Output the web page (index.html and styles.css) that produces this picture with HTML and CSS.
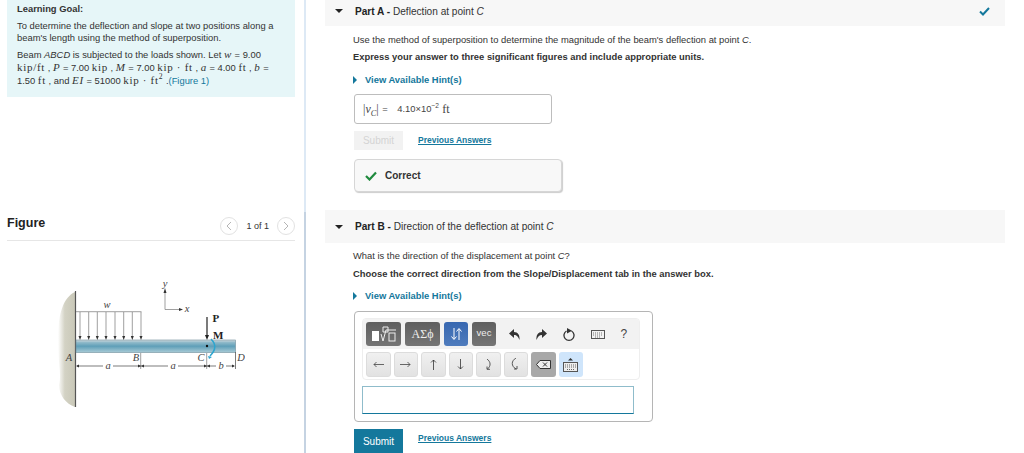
FILE: index.html
```html
<!DOCTYPE html>
<html lang="en">
<head>
    <meta charset="UTF-8">
    <title>Deflection and slope by superposition</title>
    <link rel="stylesheet" href="styles.css">
</head>
<body>
<div class="page">
    <!-- left column -->
    <div class="left">
        <div class="goal">
            <p class="goal-title">Learning Goal:</p>
            <p class="goal-text">To determine the deflection and slope at two positions along a beam's length using the method of superposition.</p>
            <p class="goal-text goal-vars">Beam <i>ABCD</i> is subjected to the loads shown. Let <i class="m">w</i> = 9.00 <span class="m">kip/ft</span> , <i class="m">P</i> = 7.00 <span class="m">kip</span> , <i class="m">M</i> = 7.00 <span class="m">kip · ft</span> , <i class="m">a</i> = 4.00 <span class="m">ft</span> , <i class="m">b</i> = 1.50 <span class="m">ft</span> , and <i class="m">EI</i> = 51000 <span class="m">kip · ft<sup>2</sup></span> .<a class="fig-link">(Figure 1)</a></p>
        </div>
        <div class="fig-head">
            <span class="fig-title">Figure</span>
            <div class="pager">
                <span class="page-btn"><svg width="6" height="10" viewBox="0 0 6 10"><path d="M5 1 1 5l4 4" fill="none" stroke="#b5b5b5" stroke-width="1"/></svg></span>
                <span class="page-num">1 of 1</span>
                <span class="page-btn"><svg width="6" height="10" viewBox="0 0 6 10"><path d="M1 1l4 4-4 4" fill="none" stroke="#b5b5b5" stroke-width="1"/></svg></span>
            </div>
        </div>
        <svg class="beam" width="190" height="183" viewBox="55 270 190 183">
            <defs>
                <linearGradient id="wallfill" x1="0" x2="1" y1="0" y2="0">
                    <stop offset="0" stop-color="#fff"/>
                    <stop offset="0.4" stop-color="#d3d2c4"/>
                    <stop offset="1" stop-color="#c9c8b8"/>
                </linearGradient>
                <linearGradient id="beamfill" x1="0" x2="0" y1="0" y2="1">
                    <stop offset="0" stop-color="#d5dcdf"/>
                    <stop offset="0.2" stop-color="#8fb9c9"/>
                    <stop offset="0.5" stop-color="#5f9fb8"/>
                    <stop offset="1" stop-color="#a9cbd6"/>
                </linearGradient>
            </defs>
            <path d="M75 292C64 297 58 312 58 340 58 365 62 375 59 385 59 395 66 404 75 407Z" fill="url(#wallfill)"/>
            <line x1="75.500" y1="291" x2="75.500" y2="407" stroke="#555" stroke-width="1.200"/>
            <rect x="76" y="340" width="159.500" height="12.500" fill="url(#beamfill)" stroke="#6d8c99" stroke-width="0.600"/>
            <!-- distributed load -->
            <path class="thin" d="M76 311.700H141.500M80 312V338M88.700 312V338M97.300 312V338M106 312V338M115 312V338M123.700 312V338M132.300 312V338M141 312V338"/>
            <path class="head" d="M78.500 336h3L80 340ZM87.200 336h3l-1.500 4ZM95.800 336h3l-1.500 4ZM104.500 336h3L106 340ZM113.500 336h3L115 340ZM122.200 336h3l-1.500 4ZM130.800 336h3l-1.500 4ZM139.500 336h3L141 340Z"/>
            <text class="lab" x="107" y="308" text-anchor="middle">w</text>
            <!-- axes -->
            <path class="thin" d="M165 291V309.500H180"/>
            <path class="head" d="M163.500 293h3L165 288ZM179 308v3l4-1.500Z"/>
            <text class="lab" x="165" y="287" text-anchor="middle">y</text>
            <text class="lab" x="187" y="312" text-anchor="middle">x</text>
            <!-- point load and moment -->
            <path d="M207 317V336" stroke="#222" stroke-width="1.200"/>
            <path d="M205 335h4l-2 5Z" fill="#222"/>
            <text class="bold" x="212.500" y="322">P</text>
            <text class="bold" x="213" y="339">M</text>
            <circle cx="207" cy="346" r="1.200" fill="#111"/>
            <path d="M211 339C216 344 216 350 210 356" fill="none" stroke="#2ca5cf" stroke-width="1.500"/>
            <path d="M208 356l4 1-3 2Z" fill="#2ca5cf"/>
            <!-- dimensions -->
            <text class="lab" x="69" y="361" text-anchor="middle">A</text>
            <text class="lab" x="136" y="361" text-anchor="middle">B</text>
            <text class="lab" x="201" y="361" text-anchor="middle">C</text>
            <text class="lab" x="241" y="361" text-anchor="middle">D</text>
            <path class="thin" d="M140.700 353V369M206.700 353V369"/>
            <path class="dim" d="M235.500 352V369M77 366H103M113 366H168M178 366H216M226 366H234"/>
            <path class="head" d="M76 366l3-1.500v3ZM235 366l-3-1.500v3ZM141 366l-3-1.500v3ZM141 366l3-1.500v3ZM207 366l-3-1.500v3ZM207 366l3-1.500v3Z"/>
            <text class="lab" x="108" y="369" text-anchor="middle">a</text>
            <text class="lab" x="173" y="369" text-anchor="middle">a</text>
            <text class="lab" x="221" y="369" text-anchor="middle">b</text>
        </svg>
    </div>
    <div class="divider"></div>

    <!-- right column -->
    <div class="right">
        <div class="part-head part-a">
            <span class="caret"></span>
            <span class="part-title"><b>Part A -</b> Deflection at point <i>C</i></span>
            <svg class="done" width="11" height="9" viewBox="0 0 11 9"><path d="M1 4.500 4 7.500 10 1" fill="none" stroke="#14789c" stroke-width="2"/></svg>
        </div>
        <div class="part-body body-a">
            <p class="q">Use the method of superposition to determine the magnitude of the beam's deflection at point <i>C</i>.</p>
            <p class="q-bold">Express your answer to three significant figures and include appropriate units.</p>
            <p class="hint"><span class="hint-arrow"></span>View Available Hint(s)</p>
            <div class="answer">
                <span class="m ans-var">|<i>v<sub>C</sub></i>|</span> <span class="ans-eq">=</span>
                <span class="ans-val">4.10×10<sup>−2</sup></span> <span class="m">ft</span>
            </div>
            <div class="actions actions-a">
                <span class="submit off">Submit</span>
                <a class="prev">Previous Answers</a>
            </div>
            <div class="correct">
                <svg width="12" height="10" viewBox="0 0 12 10"><path d="M1 5 4.500 8.500 11 1.500" fill="none" stroke="#1f8a3d" stroke-width="2.200"/></svg>
                <span>Correct</span>
            </div>
        </div>

        <div class="part-head part-b">
            <span class="caret"></span>
            <span class="part-title"><b>Part B -</b> Direction of the deflection at point <i>C</i></span>
        </div>
        <div class="part-body body-b">
            <p class="q">What is the direction of the displacement at point <i>C</i>?</p>
            <p class="q-bold">Choose the correct direction from the Slope/Displacement tab in the answer box.</p>
            <p class="hint"><span class="hint-arrow"></span>View Available Hint(s)</p>
            <div class="editor">
                <div class="tools">
                    <div class="tool-row top">
                        <span class="tbtn dark w35">
                            <svg width="26" height="18" viewBox="0 0 26 18"><rect x="1" y="6" width="7" height="10" fill="#fff"/><path d="M12 2h5v5h-5Z" fill="none" stroke="#eee"/><path d="M10 9l2 7 3-11h10" fill="none" stroke="#eee"/><rect x="18" y="8" width="6" height="8" fill="none" stroke="#eee"/></svg>
                        </span>
                        <span class="tbtn dark w35 greek">ΑΣϕ</span>
                        <span class="tbtn blue w24">
                            <svg width="13" height="12" viewBox="0 0 13 12"><path d="M4 0v11M1.500 8.500 4 11.500l2.500-3M9 12V1M6.500 3.500 9 .5l2.500 3" fill="none" stroke="#fff" stroke-width="1"/></svg>
                        </span>
                        <span class="tbtn dark w24 vec">vec</span>
                        <div class="tool-icons">
                            <svg width="11" height="11" viewBox="0 0 11 11"><path d="M0 4.500 5 0v3c4 0 6 3 5.500 8C9 7.500 8 6 5 6v3Z" fill="#333"/></svg>
                            <svg width="11" height="11" viewBox="0 0 11 11"><path d="M11 4.500 6 0v3C2 3 0 6 .5 11 2 7.500 3 6 6 6v3Z" fill="#333"/></svg>
                            <svg width="12" height="13" viewBox="0 0 12 13"><path d="M8.500 3A5 5 0 1 1 3.500 3" fill="none" stroke="#333" stroke-width="1.300"/><path d="M4 0l5 2.800L4 5.500Z" fill="#333"/></svg>
                            <svg width="14" height="9" viewBox="0 0 14 9"><rect x=".5" y=".5" width="13" height="8" fill="#f2f2f2" stroke="#555"/><path d="M2 3h10M2 5h10M4 7h6" stroke="#777" stroke-dasharray="1 1"/></svg>
                            <span class="qmark">?</span>
                        </div>
                    </div>
                    <div class="tool-row bottom">
                        <span class="tbtn light"><svg width="11" height="7" viewBox="0 0 11 7"><path d="M11 3.500H1M3.500 1 1 3.500 3.500 6" fill="none" stroke="#444" stroke-width=".8"/></svg></span>
                        <span class="tbtn light"><svg width="11" height="7" viewBox="0 0 11 7"><path d="M0 3.500H10M7.500 1 10 3.500 7.500 6" fill="none" stroke="#444" stroke-width=".8"/></svg></span>
                        <span class="tbtn light"><svg width="7" height="11" viewBox="0 0 7 11"><path d="M3.500 11V1M1 3.500 3.500 1 6 3.500" fill="none" stroke="#333" stroke-width=".8"/></svg></span>
                        <span class="tbtn light"><svg width="7" height="11" viewBox="0 0 7 11"><path d="M3.500 0V10M1 7.500 3.500 10 6 7.500" fill="none" stroke="#333" stroke-width=".8"/></svg></span>
                        <span class="tbtn light"><svg width="7" height="11" viewBox="0 0 7 11"><path d="M2 0C6 3 6 7 2.500 10M2 7.500v2.800h3" fill="none" stroke="#333" stroke-width=".8"/></svg></span>
                        <span class="tbtn light"><svg width="9" height="12" viewBox="0 0 9 12"><path d="M5 0C0 3 0 8 5 11M3 11h3V8" fill="none" stroke="#333" stroke-width=".8"/></svg></span>
                        <span class="tbtn grey"><svg width="15" height="9" viewBox="0 0 15 9"><path d="M4 .5h10.500v8H4L.5 4.500Z" fill="#eee" stroke="#333"/><path d="M7 2.500 11 6.500M11 2.500 7 6.500" stroke="#333"/></svg></span>
                        <span class="tbtn pale"><svg width="15" height="15" viewBox="0 0 15 15"><path d="M5 3.500 7.500 1 10 3.500Z" fill="#333"/><rect x=".5" y="5.500" width="14" height="9" fill="#eee" stroke="#555"/><path d="M2 8h11M2 10h11M4 12.500h7" stroke="#666" stroke-dasharray="1 1"/></svg></span>
                    </div>
                </div>
                <div class="edit-input"></div>
            </div>
            <div class="actions actions-b">
                <span class="submit">Submit</span>
                <a class="prev">Previous Answers</a>
            </div>
        </div>
    </div>
</div>
</body>
</html>
```

FILE: styles.css
```css
/* base */
html, body {
    margin: 0;
    padding: 0;
    height: 453px;
    overflow: hidden;
    background-color: white;
}

body {
    font-family: "Liberation Sans", Arial, sans-serif;
    font-size: 9.380px;
    color: #333;
}

p {
    margin: 0;
}

.m {
    font-family: "Liberation Serif", serif;
    font-size: 12px;
    line-height: 1;
}

.page {
    display: flex;
    height: 453px;
}

/* left column */
.left {
    width: 288px;
    margin-left: 7px;
    margin-right: 9px;
    flex-shrink: 0;
}

.divider {
    width: 2px;
    height: 453px;
    flex-shrink: 0;
    background: linear-gradient(#dde9f5 212px, #c5d3e2 212px);
}

.goal {
    height: 97px;
    box-sizing: border-box;
    padding: 3px 10px 0 10px;
    background-color: #e6f6f8;
}

.goal-title {
    font-weight: bold;
    line-height: 12px;
    margin-bottom: 6px;
}

.goal-text {
    line-height: 11.500px;
    margin-bottom: 5px;
    width: 265px;
}

.goal-vars {
    line-height: 13px;
    width: 258px;
}

.goal-vars .m {
    font-size: 11px;
    letter-spacing: 0.700px;
}

sup {
    font-size: 70%;
    line-height: 0;
}

sub {
    font-size: 70%;
    line-height: 0;
}

.fig-link {
    color: #14789c;
}

.fig-head {
    display: flex;
    justify-content: space-between;
    align-items: center;
    height: 31px;
    margin-top: 112px;
    border-bottom: 1px solid #e6e6e6;
}

.fig-title {
    font-size: 12.500px;
    font-weight: bold;
    color: #222;
    margin-bottom: 4px;
}

.pager {
    display: flex;
    align-items: center;
    gap: 8px;
    font-size: 9px;
    margin-top: 2px;
}

.page-btn {
    display: flex;
    align-items: center;
    justify-content: center;
    width: 16px;
    height: 16px;
    border: 1px solid #e2e2e2;
    border-radius: 50%;
}

.beam {
    display: block;
    margin-top: 29px;
    margin-left: 48px;
}

.thin {
    fill: none;
    stroke: #777;
    stroke-width: 0.700;
}

.dim {
    fill: none;
    stroke: #444;
    stroke-width: 0.700;
}

.head {
    fill: #333;
}

.lab {
    font-family: "Liberation Serif", serif;
    font-style: italic;
    font-size: 10.500px;
    fill: #444;
}

.bold {
    font-family: "Liberation Serif", serif;
    font-weight: bold;
    font-size: 11px;
    fill: #222;
}

/* right column */
.right {
    width: 680px;
    margin-left: 19px;
    flex-shrink: 0;
}

.part-head {
    display: flex;
    align-items: center;
    background-color: #f7f7f7;
    padding-left: 10px;
    font-size: 10.100px;
    color: #333;
}

.part-head b {
    color: #222;
}

.part-a {
    height: 26px;
    padding-bottom: 4px;
    box-sizing: border-box;
}

.part-b {
    height: 33px;
    margin-top: 18px;
}

.caret {
    width: 0;
    height: 0;
    border-left: 4px solid transparent;
    border-right: 4px solid transparent;
    border-top: 4px solid #222;
    margin-right: 12px;
}

.part-title {
    flex: 1;
}

.done {
    margin-right: 15px;
}

.part-body {
    padding-left: 29px;
}

.q {
    line-height: 12px;
    margin-top: 8px;
    margin-left: -1px;
}

.body-b .q {
    margin-top: 7px;
}

.q-bold {
    font-weight: bold;
    line-height: 12px;
    margin-top: 6px;
    margin-left: -1px;
}

.body-a .q-bold {
    margin-top: 5px;
}

.hint {
    display: flex;
    align-items: center;
    color: #14789c;
    font-weight: bold;
    line-height: 12px;
    margin-top: 10px;
    margin-left: -1px;
}

.body-a .hint {
    margin-top: 11px;
}

.hint-arrow {
    width: 0;
    height: 0;
    border-top: 4px solid transparent;
    border-bottom: 4px solid transparent;
    border-left: 4px solid #14789c;
    margin-right: 8px;
}

.answer {
    width: 198px;
    height: 30px;
    box-sizing: border-box;
    margin-top: 8px;
    padding-left: 8px;
    display: flex;
    align-items: center;
    gap: 3.500px;
    border: 1px solid #bdbdbd;
    border-radius: 3px;
    color: #444;
}

.ans-val {
    margin-left: 6px;
}

.actions {
    display: flex;
    align-items: center;
    gap: 15px;
}

.actions-a {
    margin-top: 7px;
}

.actions-b {
    margin-top: 7px;
}

.submit {
    width: 49px;
    height: 24px;
    display: flex;
    align-items: center;
    justify-content: center;
    background-color: #14789c;
    color: white;
    font-size: 10px;
}

.submit.off {
    height: 19px;
    background-color: #f2f2f2;
    color: #d4d4d4;
}

.prev {
    color: #14789c;
    font-size: 8.500px;
    font-weight: bold;
    text-decoration: underline;
    margin-bottom: 2px;
}

.actions-b .prev {
    margin-bottom: 7px;
}

.correct {
    width: 208px;
    height: 33px;
    box-sizing: border-box;
    margin-top: 9px;
    padding-left: 10px;
    display: flex;
    align-items: center;
    gap: 8px;
    background-color: #f8f8f8;
    border: 1px solid #d6d6d6;
    border-radius: 4px;
    box-shadow: 1px 1px 1px #ccc;
    font-size: 10px;
    font-weight: bold;
}

/* equation editor */
.editor {
    width: 299px;
    height: 111px;
    box-sizing: border-box;
    margin-top: 9px;
    padding: 6px 7px;
    border: 1px solid #b5b5b5;
    border-radius: 4px;
}

.tools {
    width: 278px;
    height: 62px;
    border: 1px solid #eeeeee;
    border-radius: 4px;
    box-sizing: border-box;
    overflow: hidden;
}

.tool-row {
    display: flex;
    align-items: center;
    padding-left: 3px;
}

.tool-row.top {
    height: 30px;
    gap: 4px;
    background-color: #f2f2f2;
}

.tool-row.bottom {
    height: 30px;
    gap: 3px;
}

.tbtn {
    display: flex;
    align-items: center;
    justify-content: center;
    box-sizing: border-box;
    width: 24.500px;
    height: 25px;
    border-radius: 3px;
}

.w35 {
    width: 35px;
    height: 24px;
}

.w24 {
    width: 24px;
    height: 24px;
}

.dark {
    background: linear-gradient(#5f5f5f, #757575);
    color: #eee;
}

.greek {
    font-family: "Liberation Serif", serif;
    font-size: 12px;
}

.vec {
    font-size: 9.500px;
    padding-bottom: 3px;
}

.blue {
    background: linear-gradient(#3767b0, #4f7cbd);
}

.light {
    background: linear-gradient(#f0f0f0, #e2e2e2);
    border: 1px solid #dcdcdc;
}

.grey {
    background-color: #a8a8a8;
}

.pale {
    background-color: #cfe5fb;
}

.tool-icons {
    display: flex;
    align-items: center;
    gap: 16px;
    margin-left: 8.500px;
}

.qmark {
    font-size: 12px;
    color: #444;
}

.edit-input {
    width: 272px;
    height: 28px;
    box-sizing: border-box;
    margin-top: 6px;
    border: 1px solid #8fbccb;
    border-bottom-color: #14789c;
}
```
